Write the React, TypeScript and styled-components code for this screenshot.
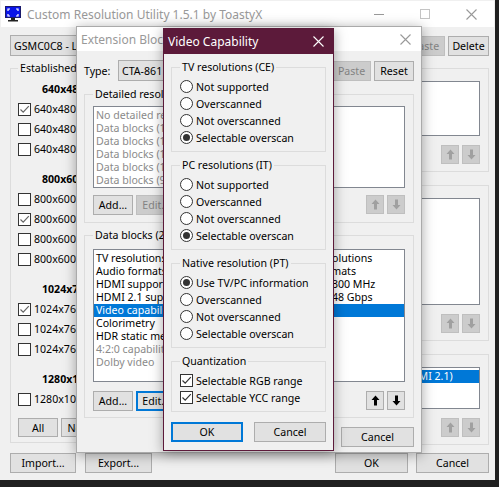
import React from 'react';
import styled, { createGlobalStyle, css } from 'styled-components';

const GlobalStyle = createGlobalStyle`
  html, body {
    margin: 0;
    padding: 0;
    background: #202020;
  }
  body {
    font-family: "Noto Sans", "Segoe UI", sans-serif;
    font-size: 10.6px;
    color: #000;
  }
  * {
    box-sizing: border-box;
  }
`;

const Desktop = styled.div`
  position: relative;
  width: 499px;
  height: 487px;
  overflow: hidden;
  background: #202020;
`;

// windows sit on the desktop at their own place
const Window = styled.div<{ $left: number; $top: number; $width: number; $height: number; $frame: string; $shadow?: boolean }>`
  position: absolute;
  left: ${p => p.$left}px;
  top: ${p => p.$top}px;
  width: ${p => p.$width}px;
  height: ${p => p.$height}px;
  display: flex;
  flex-direction: column;
  background: #f0f0f0;
  border: 1px solid ${p => p.$frame};
  ${p => p.$shadow && css`box-shadow: 0 2px 12px rgba(0, 0, 0, 0.35);`}
`;

const TitleBar = styled.div<{ $height: number; $active?: boolean }>`
  height: ${p => p.$height}px;
  flex: none;
  display: flex;
  align-items: center;
  padding-left: 4px;
  background: ${p => (p.$active ? '#5c1a3a' : '#ffffff')};
  color: ${p => (p.$active ? '#ffffff' : '#999999')};
  font-size: 12px;
  white-space: nowrap;
`;

const TitleText = styled.span`
  flex: 1;
`;

const MainTitleText = styled(TitleText)`
  margin-left: 6px;
`;

const CaptionButton = styled.div<{ $width: number }>`
  width: ${p => p.$width}px;
  height: 100%;
  display: flex;
  align-items: center;
  justify-content: center;
`;

const Body = styled.div<{ $pad: string }>`
  flex: 1;
  display: flex;
  flex-direction: column;
  padding: ${p => p.$pad};
  min-height: 0;
`;

const Row = styled.div<{ $gap?: number; $mt?: number }>`
  display: flex;
  align-items: center;
  gap: ${p => p.$gap ?? 3}px;
  margin-top: ${p => p.$mt ?? 0}px;
  flex: none;
`;

const Spacer = styled.div`
  flex: 1;
`;

const Button = styled.button<{ $w: number; $h?: number; $focus?: boolean }>`
  width: ${p => p.$w}px;
  height: ${p => p.$h ?? 20}px;
  flex: none;
  margin: 0;
  padding: 0;
  font: inherit;
  color: #000;
  background: #e1e1e1;
  border: 1px solid #adadad;
  display: inline-flex;
  align-items: center;
  justify-content: center;
  white-space: nowrap;
  overflow: hidden;
  &:disabled {
    background: #cccccc;
    border-color: #bfbfbf;
    color: #838383;
  }
  ${p => p.$focus && css`border: 2px solid #0078d7;`}
`;

const Combo = styled.div<{ $w: number }>`
  width: ${p => p.$w}px;
  height: 21px;
  flex: none;
  display: flex;
  align-items: center;
  padding: 0 3px;
  background: #e1e1e1;
  border: 1px solid #adadad;
  white-space: nowrap;
  overflow: hidden;
`;

const ComboText = styled.span`
  flex: 1;
  overflow: hidden;
`;

const Label = styled.span<{ $w?: number }>`
  width: ${p => (p.$w ? `${p.$w}px` : 'auto')};
  flex: none;
`;

const Group = styled.fieldset<{ $pt?: number; $pb?: number; $pl?: number; $w?: number; $grow?: boolean; $mt?: number }>`
  margin: ${p => p.$mt ?? 0}px 0 0 0;
  padding: ${p => p.$pt ?? 4}px 8px ${p => p.$pb ?? 7}px ${p => p.$pl ?? 8}px;
  border: 1px solid #dcdcdc;
  min-width: 0;
  display: flex;
  flex-direction: column;
  ${p => p.$w && css`width: ${p.$w}px; flex: none;`}
  ${p => p.$grow && css`flex: 1;`}
`;

const Legend = styled.legend`
  padding: 0 2px;
  line-height: 15px;
  white-space: nowrap;
`;

const ListBox = styled.div<{ $h: number }>`
  height: ${p => p.$h}px;
  flex: none;
  background: #ffffff;
  border: 1px solid #828790;
  padding-top: 2px;
  overflow: hidden;
`;

const ListItem = styled.div<{ $selected?: boolean; $dim?: boolean }>`
  height: 13px;
  line-height: 13px;
  padding-left: 2px;
  display: flex;
  white-space: nowrap;
  color: ${p => (p.$dim ? '#8a8a8a' : '#000')};
  ${p => p.$selected && css`background: #0078d7; color: #fff;`}
`;

const ItemName = styled.span`
  width: 212px;
  flex: none;
`;

const ItemDetail = styled.span``;

const ButtonRow = styled.div<{ $mt: number }>`
  display: flex;
  gap: 3px;
  margin-top: ${p => p.$mt}px;
  flex: none;
`;

const ArrowButton = styled.button`
  width: 18px;
  height: 19px;
  flex: none;
  margin: 0;
  padding: 0;
  display: flex;
  align-items: center;
  justify-content: center;
  background: #e1e1e1;
  border: 1px solid #adadad;
  color: #000;
  &:disabled {
    background: #cccccc;
    border-color: #bfbfbf;
    color: #a0a0a0;
  }
`;

const Columns = styled.div`
  flex: 1;
  display: flex;
  gap: 8px;
  margin-top: 5px;
  min-height: 0;
`;

const RightColumn = styled.div`
  flex: 1;
  display: flex;
  flex-direction: column;
  gap: 6px;
  min-width: 0;
`;

const Section = styled.div<{ $mt?: number }>`
  margin-top: ${p => p.$mt ?? 0}px;
  display: flex;
  flex-direction: column;
`;

const Heading = styled.div`
  height: 20px;
  line-height: 20px;
  padding-left: 24px;
  font-weight: 700;
  white-space: nowrap;
`;

const CheckRow = styled.div<{ $h: number }>`
  height: ${p => p.$h}px;
  display: flex;
  align-items: center;
  gap: 3px;
  white-space: nowrap;
`;

const Box = styled.span`
  width: 13px;
  height: 13px;
  flex: none;
  background: #fff;
  border: 1px solid #333;
  display: flex;
  align-items: center;
  justify-content: center;
`;

const RadioCircle = styled.span`
  width: 13px;
  height: 13px;
  flex: none;
  background: #fff;
  border: 1px solid #333;
  border-radius: 50%;
  display: flex;
  align-items: center;
  justify-content: center;
`;

const RadioDot = styled.span`
  width: 7px;
  height: 7px;
  border-radius: 50%;
  background: #333;
`;

const DialogButtons = styled.div<{ $mt: number }>`
  display: flex;
  justify-content: space-between;
  margin-top: ${p => p.$mt}px;
  flex: none;
`;

const RightButtons = styled.div`
  display: flex;
  gap: 8px;
`;

const LeftButtons = styled.div`
  display: flex;
  gap: 9px;
`;

const AppIcon = () => (
  <svg width="16" height="16" viewBox="0 0 16 16">
    <rect x="0.5" y="0.5" width="15" height="11" fill="#0a14e8" stroke="#1a1a6a" />
    <path d="M3 5V3h2M11 3h2v2M13 8v2h-2M5 10H3V8" stroke="#fff" strokeWidth="1.2" fill="none" />
    <rect x="6" y="12" width="4" height="2" fill="#222" />
    <rect x="3" y="14" width="10" height="1.5" fill="#222" />
  </svg>
);

const MinGlyph = () => (
  <svg width="10" height="10" viewBox="0 0 10 10">
    <path d="M0 5.5h10" stroke="#999" strokeWidth="1" />
  </svg>
);

const MaxGlyph = () => (
  <svg width="10" height="10" viewBox="0 0 10 10">
    <rect x="0.5" y="0.5" width="9" height="9" fill="none" stroke="#c4c4c4" strokeWidth="1" />
  </svg>
);

const CloseGlyph = ({ color }: { color: string }) => (
  <svg width="11" height="11" viewBox="0 0 11 11">
    <path d="M0.5 0.5l10 10M10.5 0.5l-10 10" stroke={color} strokeWidth="1.1" />
  </svg>
);

const ArrowGlyph = ({ down }: { down?: boolean }) => (
  <svg width="9" height="11" viewBox="0 0 9 11" style={down ? { transform: 'rotate(180deg)' } : undefined}>
    <path d="M4.5 0.5L8.5 5H6V10.5H3V5H0.5Z" fill="currentColor" />
  </svg>
);

const CheckMark = ({ color }: { color: string }) => (
  <svg width="11" height="11" viewBox="0 0 11 11">
    <path d="M1.5 5.5L4.2 8.2L9.8 2.2" stroke={color} strokeWidth="1.2" fill="none" />
  </svg>
);

const Check = ({ checked, label, color = '#333', h = 20 }: { checked?: boolean; label: string; color?: string; h?: number }) => (
  <CheckRow $h={h}>
    <Box>{checked && <CheckMark color={color} />}</Box>
    <span>{label}</span>
  </CheckRow>
);

const Radio = ({ checked, label }: { checked?: boolean; label: string }) => (
  <CheckRow $h={17}>
    <RadioCircle>{checked && <RadioDot />}</RadioCircle>
    <span>{label}</span>
  </CheckRow>
);

const Arrows = ({ enabled }: { enabled?: boolean }) => (
  <>
    <ArrowButton disabled={!enabled}><ArrowGlyph /></ArrowButton>
    <ArrowButton disabled={!enabled}><ArrowGlyph down /></ArrowButton>
  </>
);

const established = [
  { head: '640x480', rows: [['640x480 @ 60 Hz', true], ['640x480 @ 72 Hz', false], ['640x480 @ 75 Hz', false]] },
  { head: '800x600', rows: [['800x600 @ 56 Hz', false], ['800x600 @ 60 Hz', true], ['800x600 @ 72 Hz', false], ['800x600 @ 75 Hz', false]] },
  { head: '1024x768', rows: [['1024x768 @ 60 Hz', true], ['1024x768 @ 70 Hz', false], ['1024x768 @ 75 Hz', false]] },
  { head: '1280x1024', rows: [['1280x1024 @ 75 Hz', false]] },
] as const;

const dataBlocks = [
  { name: 'TV resolutions', detail: '4 resolutions' },
  { name: 'Audio formats', detail: '3 formats' },
  { name: 'HDMI support', detail: 'Max 300 MHz' },
  { name: 'HDMI 2.1 support', detail: 'Max 48 Gbps' },
  { name: 'Video capability', detail: '', selected: true },
  { name: 'Colorimetry', detail: '' },
  { name: 'HDR static metadata', detail: '' },
  { name: '4:2:0 capability map', detail: '', dim: true },
  { name: 'Dolby video', detail: '', dim: true },
];

const tvGroups = [
  { title: 'TV resolutions (CE)', options: ['Not supported', 'Overscanned', 'Not overscanned', 'Selectable overscan'], value: 3 },
  { title: 'PC resolutions (IT)', options: ['Not supported', 'Overscanned', 'Not overscanned', 'Selectable overscan'], value: 3 },
  { title: 'Native resolution (PT)', options: ['Use TV/PC information', 'Overscanned', 'Not overscanned', 'Selectable overscan'], value: 0 },
];

const MainWindow = () => (
  <Window $left={0} $top={0} $width={495} $height={480} $frame="#f0f0f0">
    <TitleBar $height={26}>
      <AppIcon />
      <MainTitleText>Custom Resolution Utility 1.5.1 by ToastyX</MainTitleText>
      <CaptionButton $width={46}><MinGlyph /></CaptionButton>
      <CaptionButton $width={46}><MaxGlyph /></CaptionButton>
      <CaptionButton $width={46}><CloseGlyph color="#999" /></CaptionButton>
    </TitleBar>
    <Body $pad="8px 5px 6px 9px">
      <Row>
        <Combo $w={230}><ComboText>GSMC0C8 - LG TV SSCR2 (active)</ComboText></Combo>
        <Spacer />
        <Button $w={39}>Edit...</Button>
        <Button $w={39}>Copy</Button>
        <Button $w={39} disabled>Paste</Button>
        <Button $w={41}>Delete</Button>
      </Row>
      <Columns>
        <Group $w={151} $pt={3} $pb={7} $pl={7}>
          <Legend>Established</Legend>
          {established.map((s, i) => (
            <Section key={s.head} $mt={i ? 10 : 0}>
              <Heading>{s.head}</Heading>
              {s.rows.map(([label, on]) => (
                <Check key={label} label={label} checked={on} color="#666" />
              ))}
            </Section>
          ))}
          <ButtonRow $mt={9}>
            <Button $w={40} $h={19}>All</Button>
            <Button $w={40} $h={19}>None</Button>
            <Button $w={40} $h={19}>Reset</Button>
          </ButtonRow>
        </Group>
        <RightColumn>
          <Group $pt={5}>
            <Legend>Detailed resolutions</Legend>
            <ListBox $h={55} />
            <ButtonRow $mt={9}>
              <Button $w={40} $h={19}>Add...</Button>
              <Button $w={40} $h={19} disabled>Edit...</Button>
              <Button $w={40} $h={19} disabled>Delete</Button>
              <Spacer />
              <Arrows />
            </ButtonRow>
          </Group>
          <Group $pt={5}>
            <Legend>Standard resolutions</Legend>
            <ListBox $h={107} />
            <ButtonRow $mt={9}>
              <Button $w={40} $h={19}>Add...</Button>
              <Button $w={40} $h={19} disabled>Edit...</Button>
              <Button $w={40} $h={19} disabled>Delete</Button>
              <Spacer />
              <Arrows />
            </ButtonRow>
          </Group>
          <Group $pt={5} $grow>
            <Legend>Extension blocks</Legend>
            <ListBox $h={42}>
              <ListItem $selected>CTA-861: 9 data blocks, HDMI 2.1, HDR, VRR (HDMI 2.1)</ListItem>
            </ListBox>
            <ButtonRow $mt={9}>
              <Button $w={40} $h={19}>Add...</Button>
              <Button $w={40} $h={19}>Edit...</Button>
              <Button $w={40} $h={19}>Delete</Button>
              <Spacer />
              <Arrows />
            </ButtonRow>
          </Group>
        </RightColumn>
      </Columns>
      <Row $mt={10}>
        <LeftButtons>
          <Button $w={66}>Import...</Button>
          <Button $w={67}>Export...</Button>
        </LeftButtons>
        <Spacer />
        <RightButtons>
          <Button $w={73}>OK</Button>
          <Button $w={73}>Cancel</Button>
        </RightButtons>
      </Row>
    </Body>
  </Window>
);

const ExtensionWindow = () => (
  <Window $left={76} $top={26} $width={346} $height={427} $frame="#aaaaaa" $shadow>
    <TitleBar $height={24}>
      <TitleText>Extension Block</TitleText>
      <CaptionButton $width={32}><CloseGlyph color="#999" /></CaptionButton>
    </TitleBar>
    <Body $pad="9px 7px 6px 7px">
      <Row>
        <Label $w={31}>Type:</Label>
        <Combo $w={130}><ComboText>CTA-861</ComboText></Combo>
        <Spacer />
        <Button $w={39}>Copy</Button>
        <Button $w={39} disabled>Paste</Button>
        <Button $w={40}>Reset</Button>
      </Row>
      <Group $mt={6} $pt={4} $pb={7}>
        <Legend>Detailed resolutions</Legend>
        <ListBox $h={82}>
          <ListItem $dim>No detailed resolutions</ListItem>
          <ListItem $dim>Data blocks (124 bytes left)</ListItem>
          <ListItem $dim>Data blocks (118 bytes left)</ListItem>
          <ListItem $dim>Data blocks (110 bytes left)</ListItem>
          <ListItem $dim>Data blocks (102 bytes left)</ListItem>
          <ListItem $dim>Data blocks (94 bytes left)</ListItem>
        </ListBox>
        <ButtonRow $mt={7}>
          <Button $w={40}>Add...</Button>
          <Button $w={40} disabled>Edit...</Button>
          <Button $w={40} disabled>Delete</Button>
          <Spacer />
          <Arrows />
        </ButtonRow>
      </Group>
      <Group $mt={5} $pt={6} $pb={6}>
        <Legend>Data blocks (2 bytes left)</Legend>
        <ListBox $h={133}>
          {dataBlocks.map(b => (
            <ListItem key={b.name} $selected={b.selected} $dim={b.dim}>
              <ItemName>{b.name}</ItemName>
              <ItemDetail>{b.detail}</ItemDetail>
            </ListItem>
          ))}
        </ListBox>
        <ButtonRow $mt={9}>
          <Button $w={40}>Add...</Button>
          <Button $w={40} $focus>Edit...</Button>
          <Button $w={40}>Delete</Button>
          <Spacer />
          <Arrows enabled />
        </ButtonRow>
      </Group>
      <DialogButtons $mt={9}>
        <Spacer />
        <RightButtons>
          <Button $w={73}>OK</Button>
          <Button $w={73}>Cancel</Button>
        </RightButtons>
      </DialogButtons>
    </Body>
  </Window>
);

const VideoCapabilityWindow = () => (
  <Window $left={163} $top={28} $width={171} $height={423} $frame="#5c1a3a" $shadow>
    <TitleBar $height={25} $active>
      <TitleText>Video Capability</TitleText>
      <CaptionButton $width={30}><CloseGlyph color="#fff" /></CaptionButton>
    </TitleBar>
    <Body $pad="6px 7px 7px 7px">
      {tvGroups.map((g, i) => (
        <Group key={g.title} $mt={i ? 6 : 0} $pt={3} $pb={5}>
          <Legend>{g.title}</Legend>
          {g.options.map((o, j) => (
            <Radio key={o} label={o} checked={j === g.value} />
          ))}
        </Group>
      ))}
      <Group $mt={6} $pt={3} $pb={5}>
        <Legend>Quantization</Legend>
        <Check label="Selectable RGB range" checked h={17} />
        <Check label="Selectable YCC range" checked h={17} />
      </Group>
      <DialogButtons $mt={10}>
        <Button $w={72} $focus>OK</Button>
        <Button $w={72}>Cancel</Button>
      </DialogButtons>
    </Body>
  </Window>
);

export default function App() {
  return (
    <>
      <GlobalStyle />
      <Desktop>
        <MainWindow />
        <ExtensionWindow />
        <VideoCapabilityWindow />
      </Desktop>
    </>
  );
}
